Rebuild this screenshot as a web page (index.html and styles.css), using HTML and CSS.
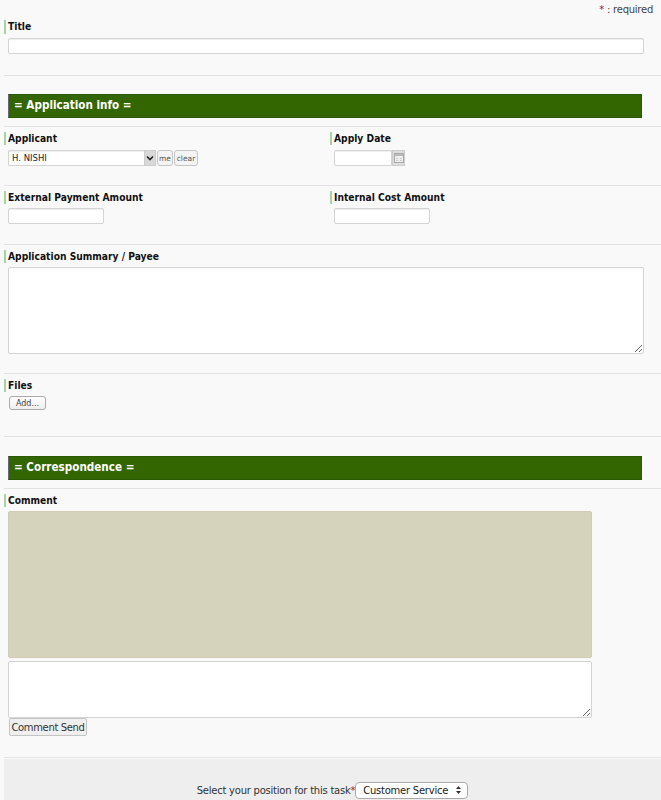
FILE: index.html
```html
<!DOCTYPE html>
<html lang="en">
<head>
<meta charset="utf-8">
<title>Application form</title>
<link rel="stylesheet" href="styles.css">
</head>
<body>
<form class="page">
  <p class="legend"><span class="req">*</span> : required</p>
  <section class="row row-title">
    <div class="field">
      <label class="label">Title</label>
      <input class="input input-full" type="text">
    </div>
  </section>
  <section class="row row-heading row-heading-app">
    <h2 class="heading">= Application info =</h2>
  </section>
  <section class="row row-two row-applicant">
    <div class="field">
      <label class="label">Applicant</label>
      <div class="controls">
        <div class="combo">
          <input class="combo-text" type="text" value="H. NISHI">
          <span class="combo-arrow">
            <svg width="8" height="6" viewBox="0 0 8 6"><path d="M1 1.5 4 4.5 7 1.5" fill="none" stroke="#222" stroke-width="1.6"/></svg>
          </span>
        </div>
        <button class="mini mini-me" type="button">me</button>
        <button class="mini mini-clear" type="button">clear</button>
      </div>
    </div>
    <div class="field">
      <label class="label">Apply Date</label>
      <div class="controls">
        <input class="input input-date" type="text">
        <span class="cal">
          <svg width="10" height="10" viewBox="0 0 10 10"><rect x=".5" y=".5" width="9" height="9" fill="#eee" stroke="#aaa"/><rect x="1" y="1" width="8" height="2" fill="#bbb"/><path d="M2 5h2v1H2zM6 5h2v1H6zM2 7h2v1H2zM6 7h2v1H6z" fill="#ccc"/></svg>
        </span>
      </div>
    </div>
  </section>
  <section class="row row-two row-amount">
    <div class="field">
      <label class="label">External Payment Amount</label>
      <input class="input input-amount" type="text">
    </div>
    <div class="field">
      <label class="label">Internal Cost Amount</label>
      <input class="input input-amount" type="text">
    </div>
  </section>
  <section class="row row-summary">
    <div class="field">
      <label class="label">Application Summary / Payee</label>
      <textarea class="area area-summary"></textarea>
    </div>
  </section>
  <section class="row row-files">
    <div class="field">
      <label class="label">Files</label>
      <button class="add" type="button">Add...</button>
    </div>
  </section>
  <section class="row row-heading row-heading-corr">
    <h2 class="heading">= Correspondence =</h2>
  </section>
  <section class="row row-comment">
    <div class="field">
      <label class="label">Comment</label>
      <div class="history"></div>
      <textarea class="area area-comment"></textarea>
      <button class="send" type="button">Comment Send</button>
    </div>
  </section>
  <footer class="foot">
    <span class="foot-text">Select your position for this task<span class="req">*</span></span>
    <span class="pos">Customer Service
      <svg width="7" height="10" viewBox="0 0 7 10"><path d="M3.5 1 6 4H1zM3.5 9 1 6h5z" fill="#333"/></svg>
    </span>
  </footer>
</form>
</body>
</html>
```
FILE: styles.css
```css
* { box-sizing: border-box; }
html, body { margin: 0; height: 800px; overflow: hidden; }
body { background: #f9f9f9; color: #111; font-family: "DejaVu Sans", Verdana, sans-serif; font-size: 10px; }
.page { display: block; padding-left: 4px; }
.legend { margin: 0; height: 18px; padding: 3px 8px 0 0; text-align: right; font-size: 10px; line-height: 13px; color: #444; letter-spacing: -0.25px; }
.req { color: #9c1c2c; }
.row { border-bottom: 1px solid #e2e2e2; }
.row-title { height: 58px; padding-top: 2px; }
.row-heading { padding-left: 4px; padding-right: 19px; }
.row-heading-app { height: 51px; padding-top: 18px; }
.row-heading-corr { height: 52px; padding-top: 19px; }
.row-two { display: flex; }
.row-two .field { width: 326px; }
.row-applicant { height: 59px; padding-top: 5px; }
.row-amount { height: 59px; padding-top: 5px; }
.row-summary { height: 129px; padding-top: 5px; }
.row-files { height: 63px; padding-top: 5px; }
.row-comment { height: 269px; padding-top: 5px; }
.label { display: block; height: 13px; margin-bottom: 4px; padding-left: 2px; border-left: 2px solid #a6d3a6; font-family: "DejaVu Sans Condensed", "DejaVu Sans", sans-serif; font-stretch: condensed; font-weight: bold; font-size: 10.2px; line-height: 13px; color: #111; }
.row-title .label { height: 14px; }
.row-applicant .label { margin-bottom: 5px; }
.input { display: block; height: 16px; padding: 0 3px; background: #fff; border: 1px solid #d4d4d4; border-radius: 2px; box-shadow: inset 0 1px 1px #eee; outline: none; }
.field > .input, .field > .area, .field > .history, .field > .add, .field > .send, .controls { margin-left: 4px; }
.input-full { width: 636px; }
.input-amount { width: 96px; }
.input-date { width: 58px; border-radius: 2px 0 0 2px; }
.heading { margin: 0; height: 24px; padding-left: 5px; background: #336600; border: 1px solid #2a5a00; border-left-color: #667; color: #fff; font-family: "DejaVu Sans Condensed", "DejaVu Sans", sans-serif; font-stretch: condensed; font-size: 11.6px; font-weight: bold; line-height: 21px; }
.controls { display: flex; height: 16px; align-items: stretch; }
.combo { display: flex; width: 148px; }
.combo-text { flex: 1; min-width: 0; height: 16px; padding: 0 3px; border: 1px solid #d4d4d4; border-right: 0; border-radius: 2px 0 0 2px; background: #fff; font-family: inherit; font-size: 8.5px; color: #223; box-shadow: inset 0 1px 1px #eee; outline: none; }
.combo-arrow { display: flex; width: 12px; align-items: center; justify-content: center; background: #d8d8d8; border: 1px solid #ccc; }
.mini { height: 16px; margin-left: 1px; padding: 0; border: 1px solid #c4c4c4; border-radius: 3px; background: #f4f4f4; font-family: inherit; font-size: 7.5px; color: #555; }
.mini-me { width: 16px; }
.mini-clear { width: 24px; margin-left: 1px; }
.cal { display: flex; width: 13px; height: 16px; align-items: center; justify-content: center; background: #ddd; border: 1px solid #ccc; }
.area { display: block; background: #fff; border: 1px solid #d4d4d4; border-radius: 2px; outline: none; }
.area-summary { width: 636px; height: 87px; }
.add { display: block; width: 37px; height: 14px; margin-left: 5px !important; padding: 0; border: 1px solid #aaa; border-radius: 3px; background: linear-gradient(#fff, #eee); font-family: inherit; font-size: 8px; color: #444; }
.history { width: 584px; height: 147px; margin-bottom: 3px; background: #d6d3bc; border: 1px solid #cfccb4; border-radius: 2px; }
.area-comment { width: 584px; height: 57px; }
.send { display: block; width: 78px; height: 18px; margin-left: 5px !important; padding: 0; background: #efefef; border: 1px solid #c4c4c4; border-radius: 2px; font-family: inherit; font-size: 10px; letter-spacing: -0.35px; white-space: nowrap; color: #333; }
.foot { display: flex; height: 42px; margin-top: 1px; padding-top: 20px; justify-content: center; align-items: center; background: #eee; }
.foot-text { font-size: 10px; letter-spacing: -0.24px; color: #333; }
.pos { display: flex; width: 113px; height: 17px; padding: 0 5px 0 7px; justify-content: space-between; align-items: center; background: #fff; border: 1px solid #aaa; border-radius: 4px; font-size: 10px; letter-spacing: -0.24px; color: #222; }
```
